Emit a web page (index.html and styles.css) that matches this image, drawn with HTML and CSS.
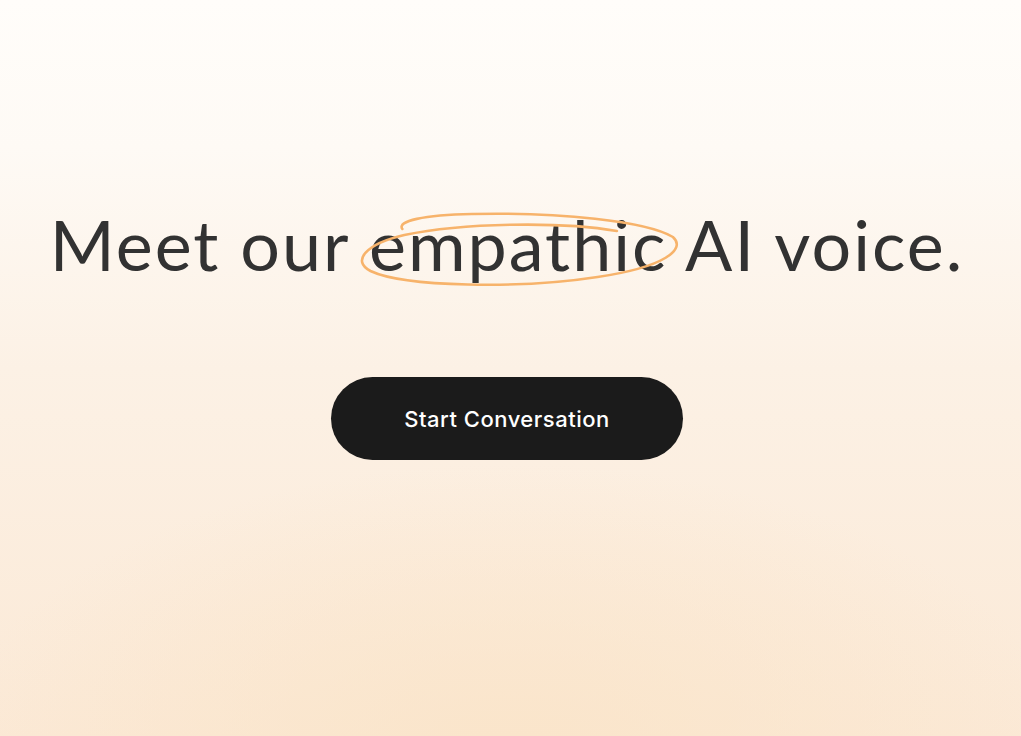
FILE: index.html
```html
<!DOCTYPE html>
<html lang="en">
<head>
<meta charset="utf-8">
<title>Meet our empathic AI voice</title>
<link rel="stylesheet" href="styles.css">
</head>
<body>
<main class="hero">
  <h1 class="headline">Meet our <span class="circled">empathic<svg class="scribble" viewBox="0 0 340 90" preserveAspectRatio="none" aria-hidden="true"><path d="M48 25 C42 17, 70 11, 120 10 C210 8, 300 17, 328 33 C342 45, 320 63, 250 73 C170 85, 50 83, 15 67 C-5 57, 10 40, 50 31 C110 19, 210 17, 270 27" fill="none" stroke="#f7b36b" stroke-width="2.6" stroke-linecap="round" vector-effect="non-scaling-stroke"/></svg></span> AI voice.</h1>
  <button class="cta" type="button">Start Conversation</button>
</main>
</body>
</html>
```

FILE: styles.css
```css
* { box-sizing: border-box; }
html, body { height: 100%; }
body {
  margin: 0;
  font-family: "Lato", "Open Sans", sans-serif;
  background:
    radial-gradient(ellipse 80% 60% at 50% 105%, rgba(250, 228, 200, 0.9), rgba(250, 228, 200, 0) 70%),
    linear-gradient(to bottom, #fffdfa 0%, #fefaf5 20%, #fcf1e5 50%, #fbe9d6 100%);
  color: #2f2f2f;
}
.hero {
  height: 100%;
  display: flex;
  flex-direction: column;
  align-items: center;
  padding-top: 199px;
  padding-right: 7px;
}
.headline {
  margin: 0;
  font-weight: 400;
  font-size: 70px;
  line-height: 90px;
  letter-spacing: 2px;
  color: #323232;
  white-space: nowrap;
}
.circled {
  position: relative;
  display: inline-block;
}
.scribble {
  position: absolute;
  left: -13px;
  top: 5px;
  width: calc(100% + 30px);
  height: 90px;
  overflow: visible;
  pointer-events: none;
}
.cta {
  margin-top: 88px;
  width: 352px;
  height: 83px;
  border: none;
  border-radius: 42px;
  background: #1b1b1b;
  color: #ffffff;
  font-family: "Inter", "Lato", sans-serif;
  font-weight: 500;
  font-size: 22px;
  letter-spacing: 0.5px;
  cursor: pointer;
}
```
